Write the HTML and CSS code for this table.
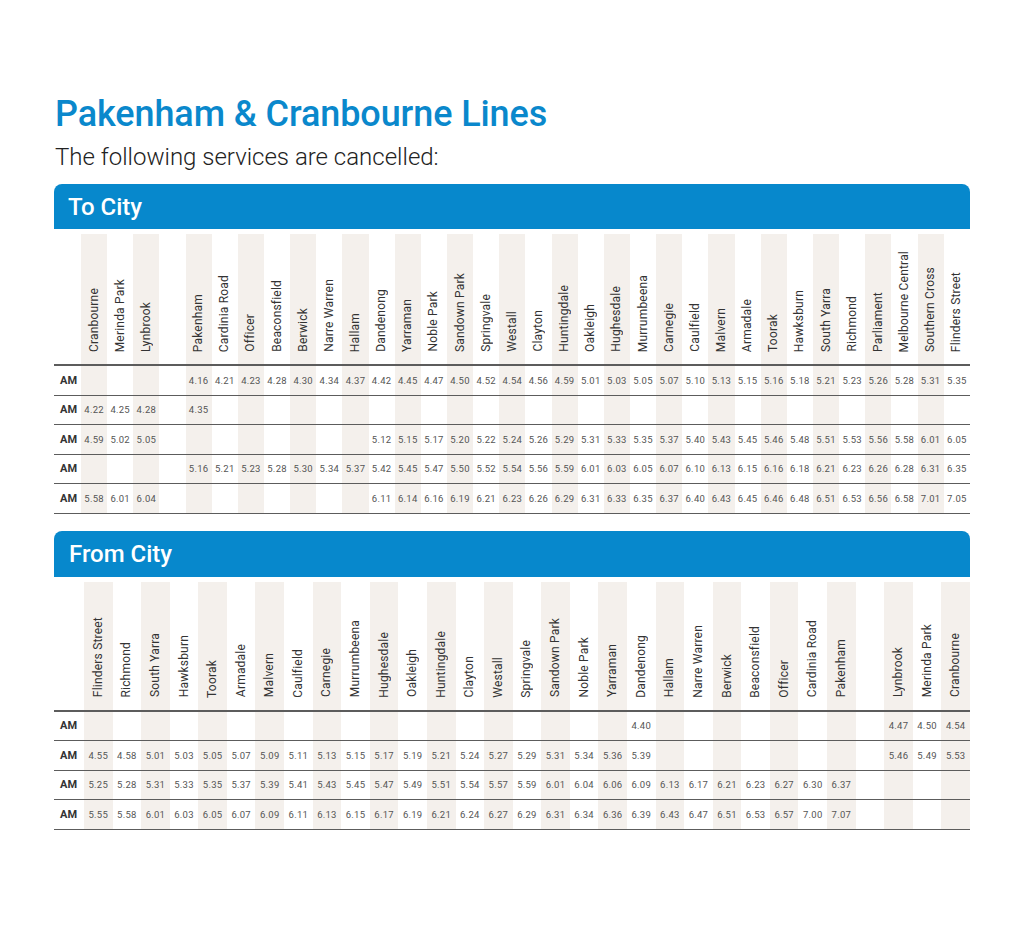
FILE: index.html
```html
<!DOCTYPE html>
<html>
<head>
<meta charset="utf-8">
<link rel="stylesheet" href="styles.css">
</head>
<body>
<div class="page">
  <h1 class="title">Pakenham &amp; Cranbourne Lines</h1>
  <p class="subtitle">The following services are cancelled:</p>

  <section class="section">
    <div class="bar">To City</div>
    <table class="tt to-city">
      <colgroup>
        <col class="c-am">
        <col class="s"><col><col class="s"><col>
        <col class="s"><col><col class="s"><col><col class="s"><col><col class="s"><col>
        <col class="s"><col><col class="s"><col><col class="s"><col><col class="s"><col>
        <col class="s"><col><col class="s"><col><col class="s"><col><col class="s"><col>
        <col class="s"><col><col class="s"><col><col class="s"><col>
      </colgroup>
      <thead>
        <tr>
          <th class="lead"></th>
          <th><span>Cranbourne</span></th><th><span>Merinda Park</span></th><th><span>Lynbrook</span></th><th></th>
          <th><span>Pakenham</span></th><th><span>Cardinia Road</span></th><th><span>Officer</span></th><th><span>Beaconsfield</span></th><th><span>Berwick</span></th><th><span>Narre Warren</span></th><th><span>Hallam</span></th><th><span>Dandenong</span></th><th><span>Yarraman</span></th><th><span>Noble Park</span></th><th><span>Sandown Park</span></th><th><span>Springvale</span></th><th><span>Westall</span></th><th><span>Clayton</span></th><th><span>Huntingdale</span></th><th><span>Oakleigh</span></th><th><span>Hughesdale</span></th><th><span>Murrumbeena</span></th><th><span>Carnegie</span></th><th><span>Caulfield</span></th><th><span>Malvern</span></th><th><span>Armadale</span></th><th><span>Toorak</span></th><th><span>Hawksburn</span></th><th><span>South Yarra</span></th><th><span>Richmond</span></th><th><span>Parliament</span></th><th><span>Melbourne Central</span></th><th><span>Southern Cross</span></th><th><span>Flinders Street</span></th>
        </tr>
      </thead>
      <tbody>
        <tr>
          <td class="am">AM</td>
          <td></td><td></td><td></td><td></td>
          <td>4.16</td><td>4.21</td><td>4.23</td><td>4.28</td><td>4.30</td><td>4.34</td><td>4.37</td><td>4.42</td><td>4.45</td><td>4.47</td><td>4.50</td><td>4.52</td><td>4.54</td><td>4.56</td><td>4.59</td><td>5.01</td><td>5.03</td><td>5.05</td><td>5.07</td><td>5.10</td><td>5.13</td><td>5.15</td><td>5.16</td><td>5.18</td><td>5.21</td><td>5.23</td><td>5.26</td><td>5.28</td><td>5.31</td><td>5.35</td>
        </tr>
        <tr>
          <td class="am">AM</td>
          <td>4.22</td><td>4.25</td><td>4.28</td><td></td>
          <td>4.35</td><td></td><td></td><td></td><td></td><td></td><td></td><td></td><td></td><td></td><td></td><td></td><td></td><td></td><td></td><td></td><td></td><td></td><td></td><td></td><td></td><td></td><td></td><td></td><td></td><td></td><td></td><td></td><td></td><td></td>
        </tr>
        <tr>
          <td class="am">AM</td>
          <td>4.59</td><td>5.02</td><td>5.05</td><td></td>
          <td></td><td></td><td></td><td></td><td></td><td></td><td></td><td>5.12</td><td>5.15</td><td>5.17</td><td>5.20</td><td>5.22</td><td>5.24</td><td>5.26</td><td>5.29</td><td>5.31</td><td>5.33</td><td>5.35</td><td>5.37</td><td>5.40</td><td>5.43</td><td>5.45</td><td>5.46</td><td>5.48</td><td>5.51</td><td>5.53</td><td>5.56</td><td>5.58</td><td>6.01</td><td>6.05</td>
        </tr>
        <tr>
          <td class="am">AM</td>
          <td></td><td></td><td></td><td></td>
          <td>5.16</td><td>5.21</td><td>5.23</td><td>5.28</td><td>5.30</td><td>5.34</td><td>5.37</td><td>5.42</td><td>5.45</td><td>5.47</td><td>5.50</td><td>5.52</td><td>5.54</td><td>5.56</td><td>5.59</td><td>6.01</td><td>6.03</td><td>6.05</td><td>6.07</td><td>6.10</td><td>6.13</td><td>6.15</td><td>6.16</td><td>6.18</td><td>6.21</td><td>6.23</td><td>6.26</td><td>6.28</td><td>6.31</td><td>6.35</td>
        </tr>
        <tr>
          <td class="am">AM</td>
          <td>5.58</td><td>6.01</td><td>6.04</td><td></td>
          <td></td><td></td><td></td><td></td><td></td><td></td><td></td><td>6.11</td><td>6.14</td><td>6.16</td><td>6.19</td><td>6.21</td><td>6.23</td><td>6.26</td><td>6.29</td><td>6.31</td><td>6.33</td><td>6.35</td><td>6.37</td><td>6.40</td><td>6.43</td><td>6.45</td><td>6.46</td><td>6.48</td><td>6.51</td><td>6.53</td><td>6.56</td><td>6.58</td><td>7.01</td><td>7.05</td>
        </tr>
      </tbody>
    </table>
  </section>

  <section class="section second">
    <div class="bar">From City</div>
    <table class="tt from-city">
      <colgroup>
        <col class="c-am">
        <col class="s"><col><col class="s"><col><col class="s"><col><col class="s"><col><col class="s"><col>
        <col class="s"><col><col class="s"><col><col class="s"><col><col class="s"><col><col class="s"><col>
        <col class="s"><col><col class="s"><col><col class="s"><col><col class="s"><col>
        <col class="s"><col><col class="s">
      </colgroup>
      <thead>
        <tr>
          <th class="lead"></th>
          <th><span>Flinders Street</span></th><th><span>Richmond</span></th><th><span>South Yarra</span></th><th><span>Hawksburn</span></th><th><span>Toorak</span></th><th><span>Armadale</span></th><th><span>Malvern</span></th><th><span>Caulfield</span></th><th><span>Carnegie</span></th><th><span>Murrumbeena</span></th><th><span>Hughesdale</span></th><th><span>Oakleigh</span></th><th><span>Huntingdale</span></th><th><span>Clayton</span></th><th><span>Westall</span></th><th><span>Springvale</span></th><th><span>Sandown Park</span></th><th><span>Noble Park</span></th><th><span>Yarraman</span></th><th><span>Dandenong</span></th><th><span>Hallam</span></th><th><span>Narre Warren</span></th><th><span>Berwick</span></th><th><span>Beaconsfield</span></th><th><span>Officer</span></th><th><span>Cardinia Road</span></th><th><span>Pakenham</span></th><th></th>
          <th><span>Lynbrook</span></th><th><span>Merinda Park</span></th><th><span>Cranbourne</span></th>
        </tr>
      </thead>
      <tbody>
        <tr>
          <td class="am">AM</td>
          <td></td><td></td><td></td><td></td><td></td><td></td><td></td><td></td><td></td><td></td><td></td><td></td><td></td><td></td><td></td><td></td><td></td><td></td><td></td><td>4.40</td><td></td><td></td><td></td><td></td><td></td><td></td><td></td><td></td>
          <td>4.47</td><td>4.50</td><td>4.54</td>
        </tr>
        <tr>
          <td class="am">AM</td>
          <td>4.55</td><td>4.58</td><td>5.01</td><td>5.03</td><td>5.05</td><td>5.07</td><td>5.09</td><td>5.11</td><td>5.13</td><td>5.15</td><td>5.17</td><td>5.19</td><td>5.21</td><td>5.24</td><td>5.27</td><td>5.29</td><td>5.31</td><td>5.34</td><td>5.36</td><td>5.39</td><td></td><td></td><td></td><td></td><td></td><td></td><td></td><td></td>
          <td>5.46</td><td>5.49</td><td>5.53</td>
        </tr>
        <tr>
          <td class="am">AM</td>
          <td>5.25</td><td>5.28</td><td>5.31</td><td>5.33</td><td>5.35</td><td>5.37</td><td>5.39</td><td>5.41</td><td>5.43</td><td>5.45</td><td>5.47</td><td>5.49</td><td>5.51</td><td>5.54</td><td>5.57</td><td>5.59</td><td>6.01</td><td>6.04</td><td>6.06</td><td>6.09</td><td>6.13</td><td>6.17</td><td>6.21</td><td>6.23</td><td>6.27</td><td>6.30</td><td>6.37</td><td></td>
          <td></td><td></td><td></td>
        </tr>
        <tr>
          <td class="am">AM</td>
          <td>5.55</td><td>5.58</td><td>6.01</td><td>6.03</td><td>6.05</td><td>6.07</td><td>6.09</td><td>6.11</td><td>6.13</td><td>6.15</td><td>6.17</td><td>6.19</td><td>6.21</td><td>6.24</td><td>6.27</td><td>6.29</td><td>6.31</td><td>6.34</td><td>6.36</td><td>6.39</td><td>6.43</td><td>6.47</td><td>6.51</td><td>6.53</td><td>6.57</td><td>7.00</td><td>7.07</td><td></td>
          <td></td><td></td><td></td>
        </tr>
      </tbody>
    </table>
  </section>
</div>
</body>
</html>
```

FILE: styles.css
```css
html, body {
  margin: 0;
  padding: 0;
  background: #ffffff;
}

body {
  font-family: Roboto, "Liberation Sans", sans-serif;
  color: #333333;
}

.page {
  width: 916px;
  padding: 94px 54px 0 54px;
}

.title {
  margin: 0;
  padding-left: 1px;
  font-size: 36px;
  line-height: 40px;
  font-weight: 500;
  color: #0a88cc;
  letter-spacing: -0.1px;
}

.subtitle {
  margin: 9px 0 0 0;
  padding-left: 1px;
  font-size: 24px;
  line-height: 28px;
  font-weight: 300;
  color: #222222;
}

.section {
  margin-top: 13px;
}

.section.second {
  margin-top: 17px;
}

.bar {
  height: 45px;
  line-height: 46px;
  background: #0788cc;
  color: #ffffff;
  font-size: 24px;
  font-weight: 500;
  padding-left: 14px;
  border-radius: 8px 8px 0 0;
}

.second .bar {
  height: 46px;
  line-height: 47px;
  padding-left: 15px;
}

.tt {
  margin-top: 5px;
  width: 916px;
  table-layout: fixed;
  border-collapse: collapse;
  border-spacing: 0;
}

.tt col.s {
  background: #f4f0ec;
}

.to-city col.c-am {
  width: 27px;
}

.from-city col.c-am {
  width: 30px;
}

.tt th {
  padding: 0 0 9px 0;
  height: 121px;
  vertical-align: bottom;
  text-align: center;
  font-weight: 400;
  font-size: 12px;
  color: #333333;
  border-bottom: 2px solid #5c5c5c;
}

.from-city th {
  height: 119px;
}

.tt th span {
  display: inline-block;
  writing-mode: vertical-rl;
  transform: rotate(180deg);
  white-space: nowrap;
  line-height: 13px;
  letter-spacing: 0.2px;
}

.tt td {
  height: 28.5px;
  padding: 0;
  text-align: center;
  vertical-align: middle;
  font-size: 9.5px;
  letter-spacing: 0.25px;
  color: #555555;
  border-bottom: 1.5px solid #5c5c5c;
  white-space: nowrap;
}

.tt td.am {
  text-align: left;
  padding-left: 6px;
  font-size: 11px;
  letter-spacing: 0;
  font-weight: 700;
  color: #333333;
}
```
